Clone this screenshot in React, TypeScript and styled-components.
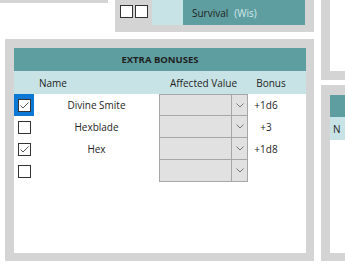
import React from 'react'
import styled, { createGlobalStyle } from 'styled-components'

const GRAY = '#d4d4d4'
const TEAL = '#5f9ea0'
const PALE = '#c8e3e5'

const GlobalStyle = createGlobalStyle`
  body {
    margin: 0;
    background: #fff;
    font-family: "Open Sans", "Noto Sans", sans-serif;
    color: #1e1e1e;
  }
`

const Sheet = styled.div`
  display: flex;
  gap: 7px;
  width: 345px;
  height: 261px;
  overflow: hidden;
`

const LeftCol = styled.div`
  display: flex;
  flex-direction: column;
  gap: 7px;
  width: 314px;
  flex-shrink: 0;
`

const TopRow = styled.div`
  display: flex;
  align-items: flex-start;
  gap: 7px;
  height: 32px;
`

const Stub = styled.div`
  width: 108px;
  height: 3px;
  background: ${GRAY};
`

const SkillPanel = styled.div`
  display: flex;
  width: 199px;
  height: 32px;
  box-sizing: border-box;
  padding: 0 9px 7px 5px;
  background: ${GRAY};
`

const BoxPair = styled.div`
  display: flex;
  gap: 2px;
  width: 32px;
  padding-top: 5px;
`

const Box = styled.span<{ $size?: number }>`
  display: flex;
  align-items: center;
  justify-content: center;
  width: ${(p) => p.$size ?? 13}px;
  height: ${(p) => p.$size ?? 13}px;
  box-sizing: border-box;
  border: 1px solid #333;
  background: #fff;
`

const ProfCell = styled.div`
  width: 31px;
  background: ${PALE};
`

const SkillName = styled.div`
  flex: 1;
  display: flex;
  align-items: center;
  gap: 6px;
  padding-left: 9px;
  background: ${TEAL};
  font-size: 10px;
  color: #1e1e1e;
`

const Ability = styled.span`
  color: #cfe9ea;
`

const MainPanel = styled.div`
  display: flex;
  margin-left: 5px;
  width: 309px;
  flex: 1;
  box-sizing: border-box;
  padding: 9px 8px 8px 9px;
  background: ${GRAY};
`

const Inner = styled.div`
  flex: 1;
  display: flex;
  flex-direction: column;
  background: #fff;
`

const Title = styled.div`
  height: 23px;
  display: flex;
  align-items: center;
  justify-content: center;
  background: ${TEAL};
  font-size: 9.5px;
  font-weight: 700;
`

const Grid = styled.div<{ $head?: boolean }>`
  display: grid;
  grid-template-columns: 20px 125px 89px 46px 1fr;
  align-items: center;
  height: ${(p) => (p.$head ? 23 : 22)}px;
  background: ${(p) => (p.$head ? PALE : 'transparent')};
  font-size: 10px;
`

const HeadName = styled.span`
  grid-column: 2;
  padding-left: 5px;
`

const Center = styled.span<{ $shift?: number }>`
  text-align: center;
  padding-right: ${(p) => p.$shift ?? 0}px;
`

const CheckCell = styled.div<{ $focus?: boolean }>`
  display: flex;
  align-items: center;
  justify-content: center;
  height: 100%;
  background: ${(p) => (p.$focus ? '#0a78d4' : 'transparent')};
`

const Select = styled.div`
  display: flex;
  height: 100%;
  box-sizing: border-box;
  border: 1px solid #a6a6a6;
  border-top-width: 0;
  background: #e1e1e1;
`

const FirstSelect = styled(Select)`
  border-top-width: 1px;
`

const SelectField = styled.div`
  flex: 1;
`

const Arrow = styled.div`
  width: 15px;
  display: flex;
  align-items: center;
  justify-content: center;
  border-left: 1px solid #a6a6a6;
`

const RightCol = styled.div`
  display: flex;
  flex-direction: column;
  gap: 5px;
  flex: 1;
`

const SidePanel = styled.div<{ $h?: number }>`
  display: flex;
  flex-direction: column;
  ${(p) => (p.$h ? `height: ${p.$h}px;` : 'flex: 1;')}
  box-sizing: border-box;
  padding: ${(p) => (p.$h ? '0 0 9px 9px' : '10px 0 8px 9px')};
  background: ${GRAY};
`

const SideInner = styled.div`
  flex: 1;
  background: #fff;
`

const SideTitle = styled.div`
  height: 22px;
  background: ${TEAL};
`

const SideHead = styled.div`
  height: 23px;
  display: flex;
  align-items: center;
  padding-left: 3px;
  background: ${PALE};
  font-size: 10px;
`

const Check = () => (
  <svg width="11" height="11" viewBox="0 0 11 11">
    <polyline points="1.5,5.5 4,8 9.5,2.5" fill="none" stroke="#555" strokeWidth="1" />
  </svg>
)

const Chevron = () => (
  <svg width="8" height="5" viewBox="0 0 8 5">
    <polyline points="0.5,0.5 4,4 7.5,0.5" fill="none" stroke="#777" strokeWidth="1" />
  </svg>
)

const rows = [
  { name: 'Divine Smite', bonus: '+1d6', checked: true, focus: true },
  { name: 'Hexblade', bonus: '+3', checked: false },
  { name: 'Hex', bonus: '+1d8', checked: true },
  { name: '', bonus: '', checked: false },
]

export default function App() {
  return (
    <>
      <GlobalStyle />
      <Sheet>
        <LeftCol>
          <TopRow>
            <Stub />
            <SkillPanel>
              <BoxPair>
                <Box $size={13} />
                <Box $size={13} />
              </BoxPair>
              <ProfCell />
              <SkillName>
                Survival <Ability>(Wis)</Ability>
              </SkillName>
            </SkillPanel>
          </TopRow>
          <MainPanel>
            <Inner>
              <Title>EXTRA BONUSES</Title>
              <Grid $head>
                <HeadName>Name</HeadName>
                <Center>Affected Value</Center>
                <Center>Bonus</Center>
              </Grid>
              {rows.map((r, i) => {
                const Sel = i === 0 ? FirstSelect : Select
                return (
                  <Grid key={i}>
                    <CheckCell $focus={r.focus}>
                      <Box>{r.checked && <Check />}</Box>
                    </CheckCell>
                    <Center>{r.name}</Center>
                    <Sel>
                      <SelectField />
                      <Arrow>
                        <Chevron />
                      </Arrow>
                    </Sel>
                    <Center $shift={10}>{r.bonus}</Center>
                  </Grid>
                )
              })}
            </Inner>
          </MainPanel>
        </LeftCol>
        <RightCol>
          <SidePanel $h={80}>
            <SideInner />
          </SidePanel>
          <SidePanel>
            <SideInner>
              <SideTitle />
              <SideHead>N</SideHead>
            </SideInner>
          </SidePanel>
        </RightCol>
      </Sheet>
    </>
  )
}
